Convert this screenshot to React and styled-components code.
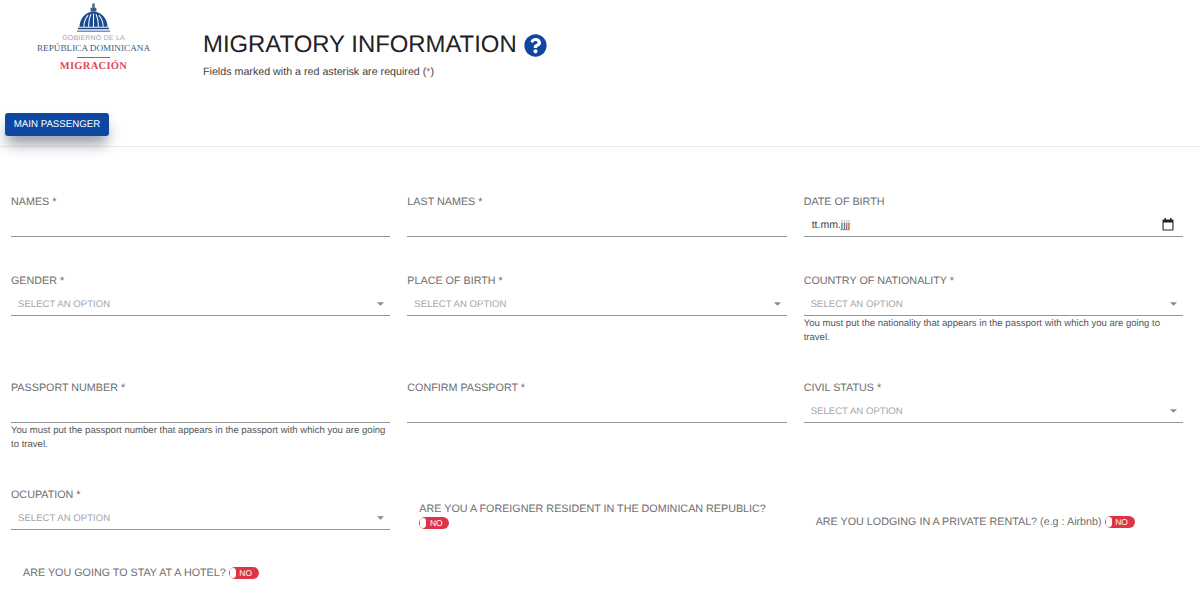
import React from 'react'
import styled, { createGlobalStyle } from 'styled-components'
import { FaQuestionCircle } from 'react-icons/fa'

const GlobalStyle = createGlobalStyle`
    html, body {
        margin: 0;
        background: #fff;
        font-family: "Liberation Sans", Arial, sans-serif;
        text-rendering: geometricPrecision;
    }
    * { box-sizing: border-box; }
`

function Dome() {
    return (
        <svg width="33" height="30" viewBox="0 0 34 30">
            <rect x="15.6" y="0" width="2.8" height="5" fill="#5d7391" />
            <rect x="14" y="4.5" width="6" height="4" fill="#3d5a85" />
            <path d="M2.5 24 C3 15 9 8.5 17 8.5 C25 8.5 31 15 31.5 24 Z" fill="#1a4a8c" />
            <g stroke="#fff" strokeWidth="1.1">
                <path d="M7 24 C7.2 19 8.8 15 11.5 12" fill="none" />
                <path d="M12 24 C12 19 12.8 14.5 14.5 11" fill="none" />
                <path d="M17 24 V10.5" />
                <path d="M22 24 C22 19 21.2 14.5 19.5 11" fill="none" />
                <path d="M27 24 C26.8 19 25.2 15 22.5 12" fill="none" />
            </g>
            <rect x="1" y="25" width="32" height="1.6" fill="#1a4a8c" />
            <rect x="0" y="28" width="34" height="1.2" fill="#5d7391" />
        </svg>
    )
}

function Logo() {
    return (
        <LogoBox>
            <Dome />
            <small>GOBIERNO DE LA</small>
            <strong>REPÚBLICA DOMINICANA</strong>
            <hr />
            <em>MIGRACIÓN</em>
        </LogoBox>
    )
}

function Caret() {
    return (
        <svg width="7" height="4" viewBox="0 0 8 4">
            <path d="M0 0 H8 L4 4 Z" fill="#8a8a8a" />
        </svg>
    )
}

function CalendarIcon() {
    return (
        <svg width="12" height="13" viewBox="0 0 12 13">
            <path d="M1.5 1.5 H10.5 A1 1 0 0 1 11.5 2.5 V11.5 A1 1 0 0 1 10.5 12.5 H1.5 A1 1 0 0 1 .5 11.5 V2.5 A1 1 0 0 1 1.5 1.5 Z M1.6 4.6 V11.4 H10.4 V4.6 Z" fill="#222" fillRule="evenodd" />
            <rect x="2.5" y="0" width="1.4" height="2" fill="#222" />
            <rect x="8.1" y="0" width="1.4" height="2" fill="#222" />
        </svg>
    )
}

function Toggle() {
    return (
        <ToggleTrack>
            <span>NO</span>
        </ToggleTrack>
    )
}

function Field({ label, helper, children }) {
    return (
        <div>
            <Label>{label}</Label>
            {children}
            {helper && <Helper>{helper}</Helper>}
        </div>
    )
}

function SelectBox() {
    return (
        <Control>
            <Placeholder>SELECT AN OPTION</Placeholder>
            <Caret />
        </Control>
    )
}

export default function App() {
    return (
        <Page>
            <GlobalStyle />
            <Header>
                <Logo />
                <div>
                    <TitleRow>
                        <Title>MIGRATORY INFORMATION</Title>
                        <FaQuestionCircle size={23} color="#0d47a1" />
                    </TitleRow>
                    <Subtitle>Fields marked with a red asterisk are required (<b>*</b>)</Subtitle>
                </div>
            </Header>

            <Tabs>
                <TabButton>MAIN PASSENGER</TabButton>
            </Tabs>

            <Form>
                <Field label="NAMES *"><TextInput /></Field>
                <Field label="LAST NAMES *"><TextInput /></Field>
                <Field label="DATE OF BIRTH">
                    <Control $date>
                        <DateValue>tt.mm.jjjj</DateValue>
                        <CalendarIcon />
                    </Control>
                </Field>

                <Field label="GENDER *"><SelectBox /></Field>
                <Field label="PLACE OF BIRTH *"><SelectBox /></Field>
                <Field
                    label="COUNTRY OF NATIONALITY *"
                    helper="You must put the nationality that appears in the passport with which you are going to travel."
                >
                    <SelectBox />
                </Field>

                <Field
                    label="PASSPORT NUMBER *"
                    helper="You must put the passport number that appears in the passport with which you are going to travel."
                >
                    <TextInput />
                </Field>
                <Field label="CONFIRM PASSPORT *"><TextInput /></Field>
                <Field label="CIVIL STATUS *"><SelectBox /></Field>

                <Field label="OCUPATION *"><SelectBox /></Field>
                <Question $top={19}>
                    ARE YOU A FOREIGNER RESIDENT IN THE DOMINICAN REPUBLIC?
                    <br />
                    <Toggle />
                </Question>
                <Question $top={32}>
                    ARE YOU LODGING IN A PRIVATE RENTAL? (e.g : Airbnb) <Toggle />
                </Question>

                <Question $top={4}>
                    ARE YOU GOING TO STAY AT A HOTEL? <Toggle />
                </Question>
            </Form>
        </Page>
    )
}

const Page = styled.div`
    width: 1200px;
    height: 597px;
    overflow: hidden;
    background: #fff;
`

const Header = styled.header`
    height: 113px;
    padding-left: 34px;
    display: flex;
    gap: 50px;
`

const LogoBox = styled.div`
    width: 119px;
    padding-top: 3px;
    display: flex;
    flex-direction: column;
    align-items: center;
    small {
        margin-top: 1px;
        font-size: 7px;
        line-height: 9px;
        letter-spacing: .2px;
        color: #a3a9b2;
    }
    strong {
        font-family: "Liberation Serif", serif;
        font-size: 9.2px;
        line-height: 10px;
        font-weight: 400;
        color: #3f5a80;
        white-space: nowrap;
    }
    hr {
        width: 33px;
        height: 1px;
        margin: 4px 0 3px;
        border: 0;
        background: #d9485a;
    }
    em {
        font-family: "Liberation Serif", serif;
        font-style: normal;
        font-weight: 700;
        font-size: 10.5px;
        line-height: 12px;
        letter-spacing: .3px;
        color: #d9485a;
    }
`

const TitleRow = styled.div`
    margin-top: 30px;
    display: flex;
    align-items: center;
    gap: 7px;
`

const Title = styled.h1`
    margin: 0;
    font-size: 23.9px;
    line-height: 30px;
    font-weight: 400;
    color: #222;
    white-space: nowrap;
`

const Subtitle = styled.p`
    margin: 5px 0 0;
    font-size: 10.7px;
    line-height: 14px;
    color: #444;
    b {
        font-weight: 400;
        color: #d9485a;
    }
`

const Tabs = styled.nav`
    height: 34px;
    padding-left: 5px;
    border-bottom: 1px solid #ececec;
`

const TabButton = styled.button`
    display: block;
    width: 104px;
    height: 23px;
    padding: 0;
    border: 0;
    border-radius: 3px;
    background: #0d47a1;
    color: #fff;
    font-family: inherit;
    font-size: 9.7px;
    text-rendering: geometricPrecision;
    box-shadow: 0 10px 14px -2px rgba(20, 30, 60, .45);
`

const Form = styled.main`
    padding: 43px 17px 0 11px;
    display: grid;
    grid-template-columns: repeat(3, 1fr);
    column-gap: 17px;
    row-gap: 32px;
    align-items: start;
`

const Label = styled.label`
    display: block;
    padding-top: 2px;
    font-size: 10.75px;
    line-height: 20px;
    color: #6e6e6e;
`

const TextInput = styled.input`
    display: block;
    width: 100%;
    height: 25px;
    padding: 0;
    border: 0;
    border-bottom: 1px solid #949494;
    background: transparent;
    outline: none;
`

const Control = styled.div`
    height: 25px;
    padding: 1px ${(props) => (props.$date ? 9 : 6)}px 0 7px;
    display: flex;
    align-items: center;
    justify-content: space-between;
    border-bottom: 1px solid #949494;
`

const Placeholder = styled.span`
    padding-top: 1px;
    font-size: 9.6px;
    color: #a6a6a6;
`

const DateValue = styled.span`
    margin-left: 1px;
    font-size: 10.5px;
    color: #444;
`

const Helper = styled.p`
    margin: 1px 0 -1px;
    font-size: 9.57px;
    line-height: 14px;
    color: #555;
`

const Question = styled.div`
    padding: ${(props) => props.$top}px 0 0 12px;
    font-size: 10.75px;
    line-height: 14px;
    color: #6e6e6e;
`

const ToggleTrack = styled.span`
    position: relative;
    display: inline-flex;
    vertical-align: middle;
    align-items: center;
    justify-content: center;
    width: 30px;
    height: 12px;
    padding-left: 4px;
    border-radius: 6px;
    background: #dc3545;
    color: #fff;
    font-size: 8.5px;
    line-height: 12px;
    &::before {
        content: "";
        position: absolute;
        left: 1px;
        top: 1px;
        width: 6px;
        height: 10px;
        border-radius: 5px;
        background: #fff;
    }
`
